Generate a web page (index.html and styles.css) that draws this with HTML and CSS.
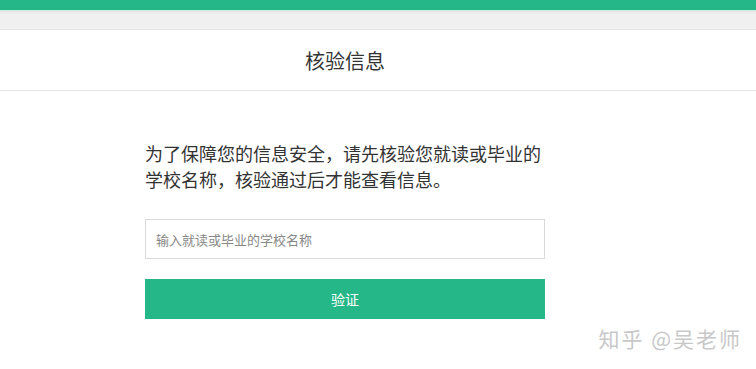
FILE: index.html
```html
<!DOCTYPE html>
<html>

<head>
    <title>核验信息</title>
    <link rel="stylesheet" href="styles.css">
</head>

<body>
    <div class="topbar"></div>
    <div class="gap"></div>

    <div class="header">
        <h2>核验信息</h2>
    </div>

    <div class="main">
        <p class="tip">为了保障您的信息安全，请先核验您就读或毕业的学校名称，核验通过后才能查看信息。</p>
        <form class="verify-form">
            <input type="text" placeholder="输入就读或毕业的学校名称">
            <button type="submit">验证</button>
        </form>
    </div>

    <div class="watermark">知乎 @吴老师</div>
</body>

</html>
```

FILE: styles.css
```css
body {
    margin: 0;
    background-color: #fff;
    font-family: "Noto Sans CJK SC", "Noto Sans", sans-serif;
    color: #333;
}

.topbar {
    height: 10px;
    background-color: #25b787;
    border-bottom: 1px solid #c8f0e0;
}

.gap {
    height: 16px;
    background-color: #f0f0f0;
    border-top: 2px solid #e8e8e8;
    border-bottom: 1px solid #e6e6e6;
}

.header {
    height: 60px;
    border-bottom: 1px solid #e5e5e5;
    display: flex;
    align-items: center;
}

.header h2 {
    width: 400px;
    margin: 0 0 0 145px;
    text-align: center;
    font-size: 20px;
    font-weight: normal;
    color: #333;
}

.main {
    width: 400px;
    margin-left: 145px;
    padding-top: 49px;
}

.tip {
    margin: 0;
    font-size: 18px;
    line-height: 26px;
    color: #333;
}

.verify-form {
    margin-top: 27px;
    display: flex;
    flex-direction: column;
    gap: 20px;
}

.verify-form input {
    width: 100%;
    height: 40px;
    padding: 0 10px;
    border: 1px solid #d9d9d9;
    border-radius: 0;
    box-sizing: border-box;
    font-family: inherit;
    font-size: 13px;
    outline: none;
}

.verify-form input::placeholder {
    color: #888;
}

.verify-form button {
    height: 40px;
    border: none;
    background-color: #25b787;
    color: #fff;
    font-family: inherit;
    font-size: 14px;
    cursor: pointer;
}

.watermark {
    position: absolute;
    right: 14px;
    bottom: 16px;
    font-size: 21px;
    color: #c8c8c8;
    letter-spacing: 2px;
}
```
